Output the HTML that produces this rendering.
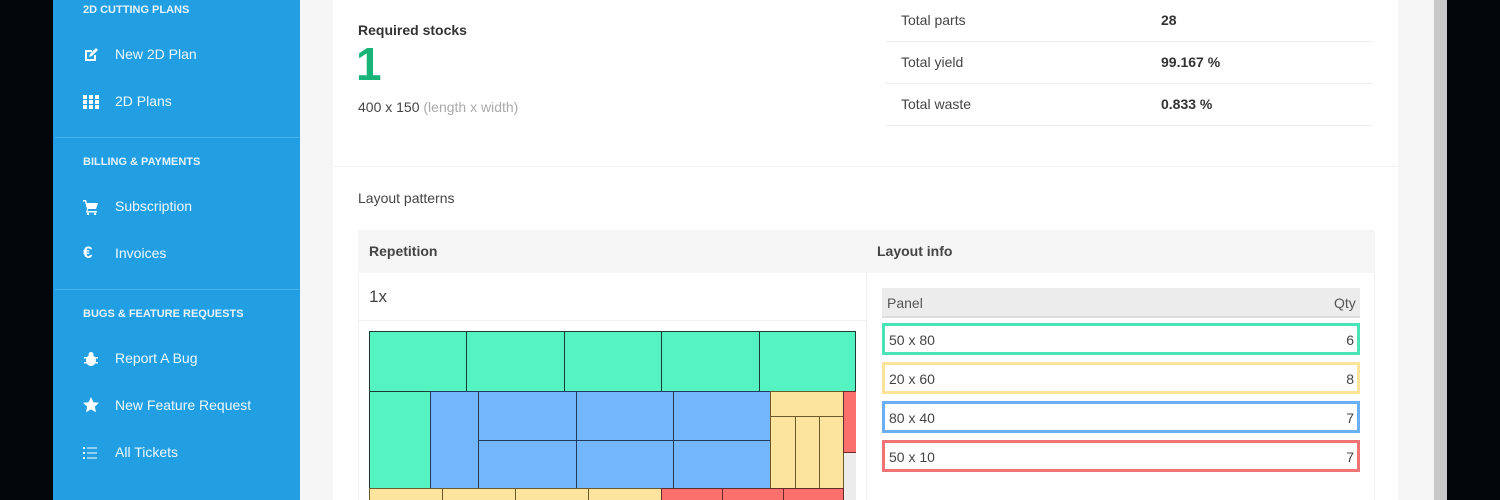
<!DOCTYPE html>
<html><head><meta charset="utf-8"><style>
*{margin:0;padding:0;box-sizing:border-box}
html,body{width:1500px;height:500px;overflow:hidden}
body{background:#02050a;font-family:"Liberation Sans",sans-serif}
#w{position:relative;width:1500px;height:500px;overflow:hidden}
.abs{position:absolute}
.side{left:53px;top:0;width:247px;height:500px;background:#229fe3;color:#fff}
.hd{position:absolute;left:30px;font-size:11px;font-weight:bold;color:#e6f3fc}
.it{position:absolute;left:62px;font-size:14px;color:#eef7fd}
.ic{position:absolute;left:30px;width:16px;height:16px}
.sep{position:absolute;left:2px;width:244px;height:1px;background:#4ab1e8}
.t{color:#333;font-size:14px}
.b{font-weight:bold}
.cell{position:absolute;border:1px solid #1c3d33}
.g{background:#55f2c2}.bl{background:#74b6fb;border-color:#1f3a5c}.y{background:#fde49e;border-color:#6b5a2a}.r{background:#fb6f6c;border-color:#6b2a2a}
.row{position:absolute;left:882px;width:478px;height:32px;background:#fff;border:3px solid;font-size:14px;color:#444}
.row span{position:absolute;top:6px}
</style></head><body><div id="w">
<div class="abs side">
<div class="hd" style="top:4px">2D CUTTING PLANS</div>
<svg class="ic" style="top:47px" viewBox="0 0 16 16"><path d="M2 3h7v2H4v7h7V8h2v6H2z" fill="#fff"/><path d="M6 10l1-3 6-6 2 2-6 6z" fill="#fff"/></svg>
<div class="it" style="top:46px">New 2D Plan</div>
<svg class="ic" style="top:94px" viewBox="0 0 16 16" fill="#fff"><rect x="0" y="1" width="4" height="4"/><rect x="6" y="1" width="4" height="4"/><rect x="12" y="1" width="4" height="4"/><rect x="0" y="6" width="4" height="4"/><rect x="6" y="6" width="4" height="4"/><rect x="12" y="6" width="4" height="4"/><rect x="0" y="11" width="4" height="4"/><rect x="6" y="11" width="4" height="4"/><rect x="12" y="11" width="4" height="4"/></svg>
<div class="it" style="top:93px">2D Plans</div>
<div class="sep" style="top:137px"></div>
<div class="hd" style="top:156px">BILLING &amp; PAYMENTS</div>
<svg class="ic" style="top:199px" viewBox="0 0 16 16" fill="#fff"><path d="M0 1h3l1 3h11l-2 6H5l-.5 2H14v1.5H3l1-3.5L2 2.5H0z"/><circle cx="5" cy="15" r="1.2"/><circle cx="12" cy="15" r="1.2"/></svg>
<div class="it" style="top:198px">Subscription</div>
<div class="abs" style="left:30px;top:243px;font-size:17px;font-weight:bold;color:#fff">€</div>
<div class="it" style="top:245px">Invoices</div>
<div class="sep" style="top:289px"></div>
<div class="hd" style="top:308px">BUGS &amp; FEATURE REQUESTS</div>
<svg class="ic" style="top:351px" viewBox="0 0 16 16" fill="#fff"><ellipse cx="8" cy="9.5" rx="5" ry="5.5"/><circle cx="8" cy="3.5" r="2.5"/><path d="M1 6h14v1.5H1zM1 11h14v1.5H1z" /></svg>
<div class="it" style="top:350px">Report A Bug</div>
<svg class="ic" style="top:397px" viewBox="0 0 16 16" fill="#fff"><path d="M8 0l2.4 5.2 5.6.6-4.2 3.8 1.2 5.6L8 12.4l-5 2.8 1.2-5.6L0 5.8l5.6-.6z"/></svg>
<div class="it" style="top:397px">New Feature Request</div>
<svg class="ic" style="top:445px" viewBox="0 0 16 16" fill="#fff"><rect x="0" y="2" width="2" height="2"/><rect x="0" y="7" width="2" height="2"/><rect x="0" y="12" width="2" height="2"/><rect x="4" y="2.5" width="10" height="1"/><rect x="4" y="7.5" width="10" height="1"/><rect x="4" y="12.5" width="10" height="1"/></svg>
<div class="it" style="top:444px">All Tickets</div>
</div>
<div class="abs" style="left:300px;top:0;width:1134px;height:500px;background:#f5f5f5"></div>
<div class="abs" style="left:1434px;top:0;width:13px;height:500px;background:#c8c8c8"></div>
<div class="abs" style="left:333px;top:0;width:1065px;height:500px;background:#fff"></div>
<div class="abs" style="left:333px;top:166px;width:1065px;height:1px;background:#f0f0f0"></div>
<div class="abs t b" style="left:358px;top:22px">Required stocks</div>
<div class="abs b" style="left:356px;top:37px;font-size:46px;color:#17b378">1</div>
<div class="abs t" style="left:358px;top:99px;color:#444">400 x 150 <span style="color:#aaa">(length x width)</span></div>
<div class="abs t" style="left:901px;top:12px;color:#444">Total parts</div><div class="abs t b" style="left:1161px;top:12px">28</div>
<div class="abs" style="left:885px;top:41px;width:488px;height:1px;background:#eee"></div>
<div class="abs t" style="left:901px;top:54px;color:#444">Total yield</div><div class="abs t b" style="left:1161px;top:54px">99.167 %</div>
<div class="abs" style="left:885px;top:83px;width:488px;height:1px;background:#eee"></div>
<div class="abs t" style="left:901px;top:96px;color:#444">Total waste</div><div class="abs t b" style="left:1161px;top:96px">0.833 %</div>
<div class="abs" style="left:885px;top:125px;width:488px;height:1px;background:#eee"></div>
<div class="abs t" style="left:358px;top:190px;color:#444">Layout patterns</div>
<div class="abs" style="left:358px;top:230px;width:1017px;height:43px;background:#f5f5f5"></div>
<div class="abs t b" style="left:369px;top:243px;color:#444">Repetition</div>
<div class="abs t b" style="left:877px;top:243px;color:#444">Layout info</div>
<div class="abs" style="left:866px;top:273px;width:1px;height:227px;background:#f0f0f0"></div>
<div class="abs" style="left:358px;top:273px;width:1px;height:227px;background:#f0f0f0"></div>
<div class="abs" style="left:1374px;top:273px;width:1px;height:227px;background:#f0f0f0"></div>
<div class="abs" style="left:358px;top:320px;width:508px;height:1px;background:#f0f0f0"></div>
<div class="abs" style="left:369px;top:287px;font-size:17px;color:#444">1x</div>
<div class="abs" style="left:843px;top:453px;width:13px;height:47px;background:#ececec"></div>
<div class="cell g" style="left:369px;top:331px;width:98px;height:61px"></div>
<div class="cell g" style="left:466px;top:331px;width:99px;height:61px"></div>
<div class="cell g" style="left:564px;top:331px;width:98px;height:61px"></div>
<div class="cell g" style="left:661px;top:331px;width:99px;height:61px"></div>
<div class="cell g" style="left:759px;top:331px;width:97px;height:61px"></div>
<div class="cell g" style="left:369px;top:391px;width:62px;height:98px"></div>
<div class="cell bl" style="left:430px;top:391px;width:49px;height:98px"></div>
<div class="cell bl" style="left:478px;top:391px;width:99px;height:50px"></div>
<div class="cell bl" style="left:576px;top:391px;width:98px;height:50px"></div>
<div class="cell bl" style="left:673px;top:391px;width:98px;height:50px"></div>
<div class="cell bl" style="left:478px;top:440px;width:99px;height:49px"></div>
<div class="cell bl" style="left:576px;top:440px;width:98px;height:49px"></div>
<div class="cell bl" style="left:673px;top:440px;width:98px;height:49px"></div>
<div class="cell y" style="left:770px;top:391px;width:74px;height:26px"></div>
<div class="cell y" style="left:770px;top:416px;width:26px;height:73px"></div>
<div class="cell y" style="left:795px;top:416px;width:25px;height:73px"></div>
<div class="cell y" style="left:819px;top:416px;width:25px;height:73px"></div>
<div class="cell r" style="left:843px;top:391px;width:13px;height:62px;border-right:none"></div>
<div class="cell y" style="left:369px;top:488px;width:74px;height:12px;border-bottom:none"></div>
<div class="cell y" style="left:442px;top:488px;width:74px;height:12px;border-bottom:none"></div>
<div class="cell y" style="left:515px;top:488px;width:74px;height:12px;border-bottom:none"></div>
<div class="cell y" style="left:588px;top:488px;width:74px;height:12px;border-bottom:none"></div>
<div class="cell r" style="left:661px;top:488px;width:62px;height:12px;border-bottom:none"></div>
<div class="cell r" style="left:722px;top:488px;width:62px;height:12px;border-bottom:none"></div>
<div class="cell r" style="left:783px;top:488px;width:61px;height:12px;border-bottom:none"></div>
<div class="abs" style="left:882px;top:288px;width:478px;height:30px;background:#ececec;border-bottom:2px solid #ddd"></div>
<div class="abs" style="left:887px;top:295px;font-size:14px;color:#555">Panel</div>
<div class="abs" style="left:1334px;top:295px;font-size:14px;color:#555">Qty</div>
<div class="row" style="top:323px;border-color:#4ae3b7"><span style="left:4px">50 x 80</span><span style="right:3px">6</span></div>
<div class="row" style="top:362px;border-color:#fbe39a"><span style="left:4px">20 x 60</span><span style="right:3px">8</span></div>
<div class="row" style="top:401px;border-color:#6aaef5"><span style="left:4px">80 x 40</span><span style="right:3px">7</span></div>
<div class="row" style="top:440px;border-color:#f07474"><span style="left:4px">50 x 10</span><span style="right:3px">7</span></div>
</div></body></html>
